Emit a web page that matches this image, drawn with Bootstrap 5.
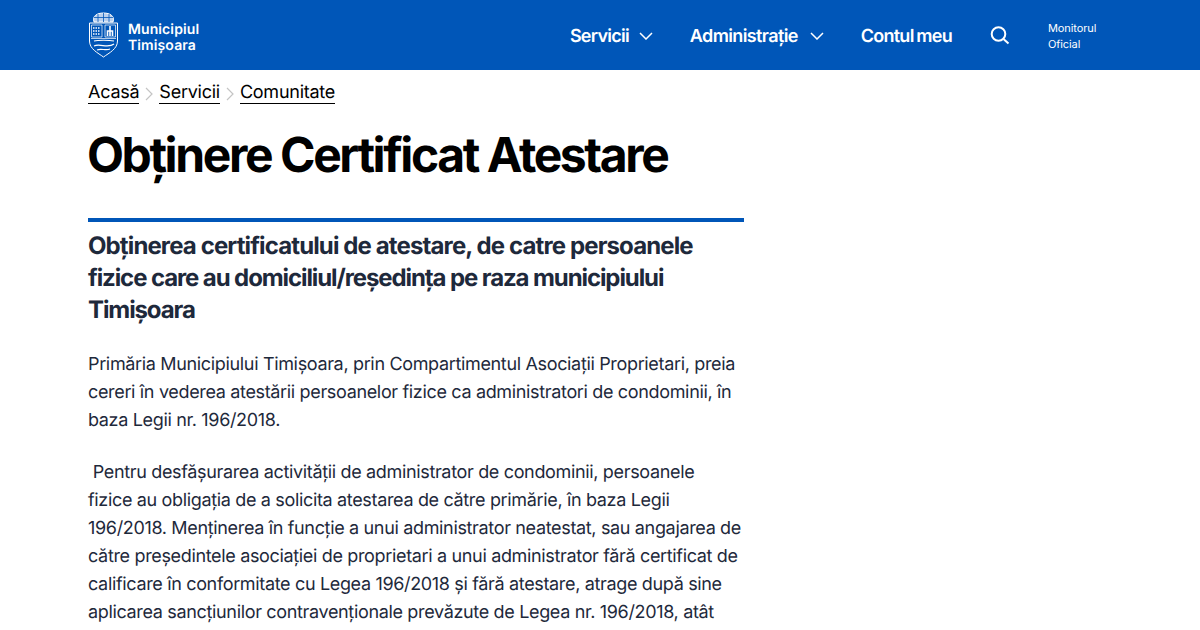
<!DOCTYPE html>
<html lang="ro"><head><meta charset="utf-8">
<link href="https://cdn.jsdelivr.net/npm/bootstrap@5.3.0/dist/css/bootstrap.min.css" rel="stylesheet">
<style>
html,body{height:630px;overflow:hidden}
body{font-family:"Inter",sans-serif;color:#1e293b;background:#fff;text-rendering:geometricPrecision}
.topbar{background:#0056b8;height:70px;padding:0 88px}
.brandname{font-size:14px;line-height:16px;font-weight:600;color:#fff;letter-spacing:.1px;margin-left:9px;padding-top:5px}
.mainlink{color:#fff;font-size:18px;font-weight:600;letter-spacing:-.75px;word-spacing:-1px;text-decoration:none;padding-top:2px}
.navset{margin-left:auto}
.chev{margin-left:10px}
.item-serv{margin-right:37px}
.item-adm{margin-right:37px;letter-spacing:-.62px}
.item-adm .chev{margin-left:12px}
.item-cont{margin-right:38px}
.srch{margin-right:38px}
.monitor{color:#fff;font-size:11px;line-height:16px;font-weight:400;letter-spacing:-.1px;text-decoration:none;width:64px;padding-top:2px}
.crumbs{padding:13px 0 1px 88px;font-size:18px;line-height:24px;color:#000;letter-spacing:-.25px}
.crumbs a{color:#000;text-decoration:none;border-bottom:1px solid #000;display:inline-block;line-height:20px}
.crumbs svg{margin:0 6px}
.maintitle{font-size:48px;font-weight:700;letter-spacing:-2.4px;line-height:58px;color:#000;margin:21px 0 34px 87px}
.contentcol{width:656px;margin-left:88px;border-top:4px solid #0056b8}
.subtitle{font-size:24px;line-height:32px;font-weight:700;letter-spacing:-.88px;color:#1e293b;margin:8px 0 25px}
.tightline{letter-spacing:-1.1px}
.para{font-size:18px;line-height:28px;margin:0 0 24px;color:#1e293b;letter-spacing:-.34px}
</style></head><body>
<header class="topbar d-flex align-items-center">
<a href="#" class="d-flex align-items-center text-decoration-none">
<svg width="31" height="46" viewBox="0 0 31 46" fill="none" stroke="#fff" stroke-width="1"><path d="M6 10C4 4 9 1 15.500 1S27 4 25 10Z" fill="#b9d0ee" stroke="#fff"/><path d="M6 5.500H25M10 2V10M15.500 1V10M21 2V10" stroke="#0056b8" stroke-width=".8"/><path d="M1.500 11H29.500V29C29.500 37 21 41 15.500 45C10 41 1.500 37 1.500 29Z" fill="#0056b8"/><path d="M3.500 13H14V25H3.500ZM17 13H27.500V25H17Z" stroke-width=".7"/><path d="M5 16H12.500M5 19H12.500M5 22H12.500" stroke-width="1.300" stroke-dasharray="1.500 1"/><path d="M22 14V24M19.500 24V19H24.500V24" stroke-width="1.600"/><path d="M3 26.500H28" stroke-width=".7"/><path d="M6 29C10 28 21 28 26 29M6 34C12 31 20 37 26 32M9 38C13 36 18 39 22 37" stroke-width="1.200"/></svg>
<span class="brandname">Municipiul<br>Timișoara</span></a>
<nav class="navset d-flex align-items-center">
<a href="#" class="mainlink item-serv d-flex align-items-center">Servicii<svg class="chev" width="14" height="8" viewBox="0 0 14 8" fill="none" stroke="#fff" stroke-width="1.500"><path d="M1 1l6 6 6-6"/></svg></a>
<a href="#" class="mainlink item-adm d-flex align-items-center">Administrație<svg class="chev" width="14" height="8" viewBox="0 0 14 8" fill="none" stroke="#fff" stroke-width="1.500"><path d="M1 1l6 6 6-6"/></svg></a>
<a href="#" class="mainlink item-cont">Contul meu</a>
<svg class="srch" width="20" height="20" viewBox="0 0 20 20" fill="none" stroke="#fff" stroke-width="2"><circle cx="8.500" cy="9" r="6.800"/><path d="M13.500 14L18.500 18.500"/></svg>
<a href="#" class="monitor">Monitorul<br>Oficial</a>
</nav>
</header>
<nav class="crumbs d-flex align-items-center"><a href="#">Acasă</a><svg width="8" height="14" viewBox="0 0 8 14" fill="none" stroke="#c4c4c4" stroke-width="1.200"><path d="M1 1l6 6-6 6"/></svg><a href="#">Servicii</a><svg width="8" height="14" viewBox="0 0 8 14" fill="none" stroke="#c4c4c4" stroke-width="1.200"><path d="M1 1l6 6-6 6"/></svg><a href="#">Comunitate</a></nav>
<h1 class="maintitle">Obținere Certificat Atestare</h1>
<main class="contentcol">
<h2 class="subtitle">Obținerea certificatului de atestare, de catre persoanele <span class="tightline">fizice care au domiciliul/reședința pe raza municipiului Timișoara</span></h2>
<p class="para">Primăria Municipiului Timișoara, prin Compartimentul Asociații Proprietari, preia cereri în vederea atestării persoanelor fizice ca administratori de condominii, în baza Legii nr. 196/2018.</p>
<p class="para">&nbsp;Pentru desfășurarea activității de administrator de condominii, persoanele<br>fizice au obligația de a solicita atestarea de către primărie, în baza Legii 196/2018. Menținerea în funcție a unui administrator neatestat, sau angajarea de către președintele asociației de proprietari a unui administrator fără certificat de calificare în conformitate cu Legea 196/2018 și fără atestare, atrage după sine aplicarea sancțiunilor contravenționale prevăzute de Legea nr. 196/2018, atât</p>
</main>
<script src="https://cdn.jsdelivr.net/npm/bootstrap@5.3.0/dist/js/bootstrap.bundle.min.js"></script>
</body></html>
